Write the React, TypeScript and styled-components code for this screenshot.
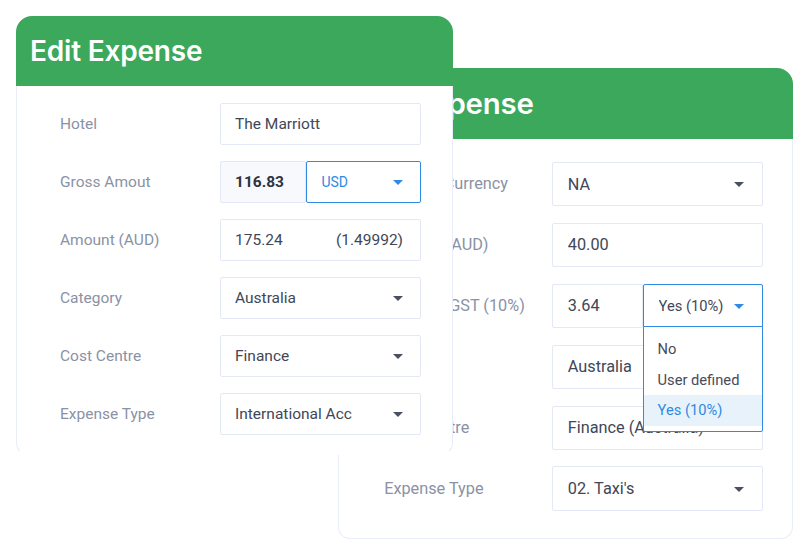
import React from 'react'
import styled, { createGlobalStyle } from 'styled-components'

const GlobalStyle = createGlobalStyle`
  html, body {
    margin: 0;
    padding: 0;
    background: #ffffff;
  }
  body {
    font-family: Roboto, "Liberation Sans", sans-serif;
  }
`

const Stage = styled.div`
  position: relative;
  width: 800px;
  height: 550px;
  overflow: hidden;
  background: #ffffff;
`

// each card is a floating window; --k scales its inner form
const Card = styled.section<{ $x: number; $y: number; $w: number; $h: number; $k: number; $z: number }>`
  position: absolute;
  left: ${p => p.$x}px;
  top: ${p => p.$y}px;
  width: ${p => p.$w}px;
  height: ${p => p.$h}px;
  z-index: ${p => p.$z};
  --k: ${p => p.$k};
  display: flex;
  flex-direction: column;
`

const Header = styled.header<{ $h: number }>`
  flex: none;
  height: ${p => p.$h}px;
  background: #3ba85c;
  border-radius: 16px 16px 0 0;
  display: flex;
  align-items: center;
  padding-left: calc(14px * var(--k));
  color: #ffffff;
  font-family: Inter, "Noto Sans", sans-serif;
  font-weight: 600;
  font-size: calc(28px * var(--k));
  letter-spacing: -0.2px;
`

const Body = styled.div<{ $pad: number; $closed?: boolean }>`
  flex: 1;
  background: #ffffff;
  border: 1px solid #e8edf7;
  border-top: none;
  border-bottom-color: ${p => (p.$closed ? '#e8edf7' : 'transparent')};
  border-radius: 0 0 12px 12px;
  padding: ${p => p.$pad}px 0 0 calc(43px * var(--k));
  display: flex;
  flex-direction: column;
  gap: calc(16px * var(--k));
`

const Row = styled.div`
  display: grid;
  grid-template-columns: calc(160px * var(--k)) calc(201px * var(--k));
  align-items: center;
`

const Label = styled.label`
  font-size: calc(15.5px * var(--k));
  color: #8a92a5;
  white-space: nowrap;
  margin-top: -1px;
`

const Field = styled.div<{ $active?: boolean; $muted?: boolean }>`
  position: relative;
  box-sizing: border-box;
  height: calc(42px * var(--k));
  border: 1px solid ${p => (p.$active ? '#2f8ae3' : '#e3e8f4')};
  border-radius: 2px;
  background: ${p => (p.$muted ? '#f7f9fd' : '#ffffff')};
  display: flex;
  align-items: center;
  justify-content: space-between;
  padding: 0 calc(17px * var(--k)) 0 calc(14px * var(--k));
  white-space: nowrap;
`

const Split = styled.div`
  display: grid;
  grid-template-columns: 43% 57%;
`

const Value = styled.span<{ $bold?: boolean; $blue?: boolean; $small?: boolean }>`
  font-size: ${p => (p.$small ? 'calc(14px * var(--k))' : 'calc(15.5px * var(--k))')};
  font-weight: ${p => (p.$bold ? 700 : 400)};
  color: ${p => (p.$blue ? '#2f8ae3' : p.$bold ? '#2e3340' : '#414757')};
  overflow: hidden;
`

const Caret = styled.span<{ $blue?: boolean }>`
  flex: none;
  width: 0;
  height: 0;
  border-left: calc(5px * var(--k)) solid transparent;
  border-right: calc(5px * var(--k)) solid transparent;
  border-top: calc(5.5px * var(--k)) solid ${p => (p.$blue ? '#2f8ae3' : '#4a5061')};
  margin-top: 1px;
`

const Menu = styled.ul`
  position: absolute;
  top: calc(100% - 1px);
  left: -1px;
  right: -1px;
  margin: 0;
  padding: calc(7px * var(--k)) 0 calc(5px * var(--k));
  list-style: none;
  background: #ffffff;
  border: 1px solid #2f8ae3;
  border-radius: 0 0 2px 2px;
  z-index: 5;
`

const Option = styled.li<{ $selected?: boolean }>`
  height: calc(29px * var(--k));
  display: flex;
  align-items: center;
  padding-left: calc(13px * var(--k));
  font-size: calc(14px * var(--k));
  color: ${p => (p.$selected ? '#2f8ae3' : '#464c5c')};
  background: ${p => (p.$selected ? '#e8f2fb' : 'transparent')};
`

const Select = ({ value }: { value: string }) => (
  <Field>
    <Value>{value}</Value>
    <Caret />
  </Field>
)

const Text = ({ value, note }: { value: string; note?: string }) => (
  <Field>
    <Value>{value}</Value>
    {note && <Value>{note}</Value>}
  </Field>
)

const BackCard = () => (
  <Card $x={338} $y={68} $w={455} $h={471} $k={1.05} $z={1}>
    <Header $h={71}>Edit Expense</Header>
    <Body $pad={23} $closed>
      <Row>
        <Label>Original Currency</Label>
        <Select value="NA" />
      </Row>
      <Row>
        <Label>Amount (AUD)</Label>
        <Text value="40.00" />
      </Row>
      <Row>
        <Label>Includes GST (10%)</Label>
        <Split>
          <Field>
            <Value>3.64</Value>
          </Field>
          <Field $active>
            <Value $small>Yes (10%)</Value>
            <Caret $blue />
            <Menu>
              <Option>No</Option>
              <Option>User defined</Option>
              <Option $selected>Yes (10%)</Option>
            </Menu>
          </Field>
        </Split>
      </Row>
      <Row>
        <Label>Category</Label>
        <Select value="Australia" />
      </Row>
      <Row>
        <Label>Cost Centre</Label>
        <Select value="Finance (Australia)" />
      </Row>
      <Row>
        <Label>Expense Type</Label>
        <Select value="02. Taxi's" />
      </Row>
    </Body>
  </Card>
)

const FrontCard = () => (
  <Card $x={16} $y={16} $w={437} $h={439} $k={1} $z={2}>
    <Header $h={70}>Edit Expense</Header>
    <Body $pad={17}>
      <Row>
        <Label>Hotel</Label>
        <Text value="The Marriott" />
      </Row>
      <Row>
        <Label>Gross Amout</Label>
        <Split>
          <Field $muted>
            <Value $bold>116.83</Value>
          </Field>
          <Field $active>
            <Value $small $blue>USD</Value>
            <Caret $blue />
          </Field>
        </Split>
      </Row>
      <Row>
        <Label>Amount (AUD)</Label>
        <Text value="175.24" note="(1.49992)" />
      </Row>
      <Row>
        <Label>Category</Label>
        <Select value="Australia" />
      </Row>
      <Row>
        <Label>Cost Centre</Label>
        <Select value="Finance" />
      </Row>
      <Row>
        <Label>Expense Type</Label>
        <Select value="International Acc" />
      </Row>
    </Body>
  </Card>
)

export default function App() {
  return (
    <>
      <GlobalStyle />
      <Stage>
        <BackCard />
        <FrontCard />
      </Stage>
    </>
  )
}
